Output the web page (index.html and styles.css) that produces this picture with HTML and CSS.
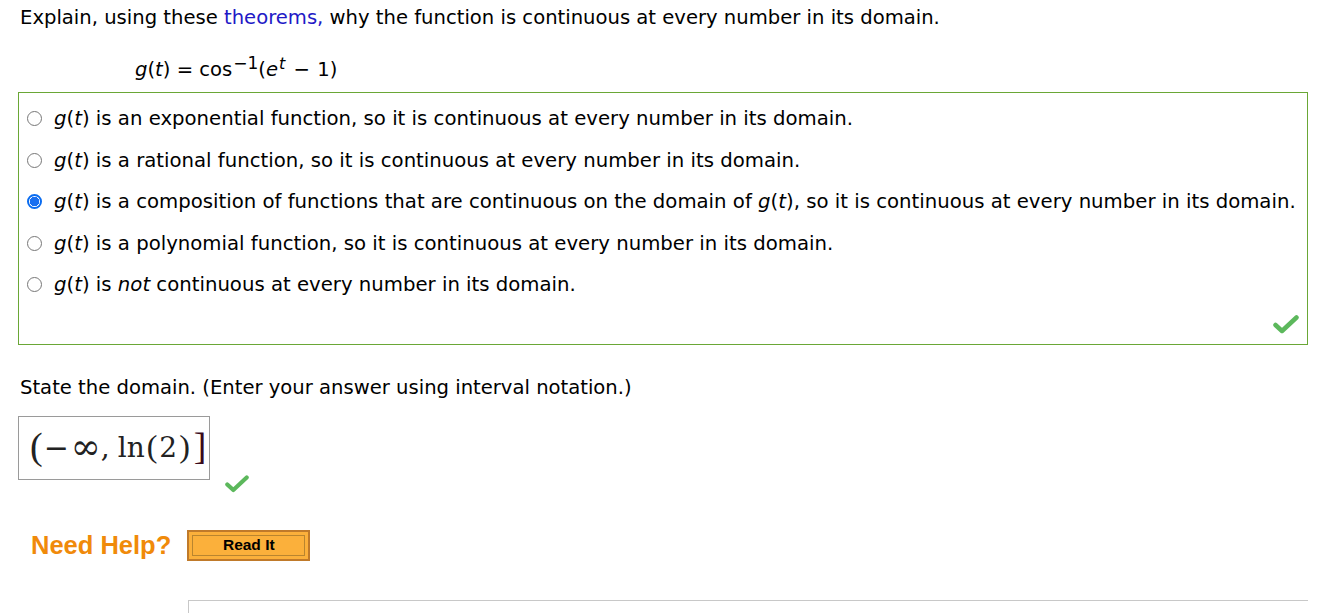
FILE: index.html
```html
<!DOCTYPE html>
<html>
<head>
<meta charset="utf-8">
<link rel="stylesheet" href="styles.css">
</head>
<body>
<div class="page">
  <p class="prompt">Explain, using these <a class="link" href="#">theorems,</a> why the function is continuous at every number in its domain.</p>
  <p class="formula"><i>g</i>(<i>t</i>) = cos<sup class="inv">−1</sup>(<i>e</i><sup class="exp"><i>t</i></sup> <span class="op">−</span> 1)</p>
  <div class="choices">
    <label class="choice"><span class="radio"></span><span><i>g</i>(<i>t</i>) is an exponential function, so it is continuous at every number in its domain.</span></label>
    <label class="choice"><span class="radio"></span><span><i>g</i>(<i>t</i>) is a rational function, so it is continuous at every number in its domain.</span></label>
    <label class="choice"><span class="radio on"></span><span><i>g</i>(<i>t</i>) is a composition of functions that are continuous on the domain of <i>g</i>(<i>t</i>), so it is continuous at every number in its domain.</span></label>
    <label class="choice"><span class="radio"></span><span><i>g</i>(<i>t</i>) is a polynomial function, so it is continuous at every number in its domain.</span></label>
    <label class="choice"><span class="radio"></span><span><i>g</i>(<i>t</i>) is <i>not</i> continuous at every number in its domain.</span></label>
    <div class="check-row">
      <svg class="check" width="26" height="20" viewBox="0 0 26 20"><path d="M2.5 11 L9 17 L23.5 3.5" fill="none" stroke="#5cb85c" stroke-width="4.5" stroke-linecap="round" stroke-linejoin="round"/></svg>
    </div>
  </div>
  <p class="prompt state">State the domain. (Enter your answer using interval notation.)</p>
  <div class="answer-row">
    <div class="answer"><span class="big">(</span><span class="minus">−</span><span class="inf">∞</span>,<span class="ln">ln</span><span class="mid">(</span>2<span class="mid">)</span><span class="bracket">]</span></div>
    <svg class="check small" width="24" height="19" viewBox="0 0 26 20"><path d="M2.5 11 L9 17 L23.5 3.5" fill="none" stroke="#5cb85c" stroke-width="4.5" stroke-linecap="round" stroke-linejoin="round"/></svg>
  </div>
  <div class="help">
    <span class="need">Need Help?</span>
    <span class="readit"><span class="readit-inner">Read It</span></span>
  </div>
  <div class="bottom-line"></div>
</div>
</body>
</html>
```
FILE: styles.css
```css
body {
  margin: 0;
  background: #fff;
  font-family: "DejaVu Sans", Verdana, sans-serif;
  color: #000;
}
.page {
  padding: 6px 18px 0 18px;
}
.prompt {
  margin: 0;
  font-size: 19.6px;
  line-height: 24px;
  padding-left: 2px;
}
.link {
  color: #2219c6;
  text-decoration: none;
}
.formula {
  margin: 28px 0 0 117px;
  font-size: 19.6px;
  line-height: 24px;
}
.formula sup {
  line-height: 0;
}
.formula .inv {
  font-size: 17px;
  vertical-align: 7px;
  margin: 0 0 0 1px;
}
.formula .exp {
  font-size: 16px;
  vertical-align: 7px;
  margin: 0 1px 0 1px;
}
.formula .op { margin: 0 1px; }
.choices {
  margin-top: 10px;
  border: 1px solid #6aa736;
  display: flex;
  flex-direction: column;
  padding: 5px 0 0 0;
}
.choice {
  display: flex;
  align-items: center;
  height: 41.5px;
  font-size: 19.7px;
  padding-left: 8px;
}
.radio {
  width: 13px;
  height: 13px;
  border: 1px solid #777;
  border-radius: 50%;
  margin-right: 12px;
  flex: none;
  box-sizing: content-box;
}
.radio.on {
  border: 2px solid #0a6cf0;
  width: 11px;
  height: 11px;
  background: radial-gradient(circle, #1a6ff0 0 4.5px, #fff 5px);
}
.check-row {
  display: flex;
  justify-content: flex-end;
  padding: 0 8px 10px 0;
  height: 38px;
  box-sizing: border-box;
  align-items: flex-end;
}
.state {
  margin-top: 31px;
}
.answer-row {
  display: flex;
  align-items: flex-end;
  margin-top: 16px;
}
.answer {
  border: 1px solid #9a9a9a;
  width: 192px;
  height: 64px;
  box-sizing: border-box;
  display: flex;
  align-items: center;
  padding-left: 11px;
  font-family: "DejaVu Serif", "Liberation Serif", serif;
  font-size: 28px;
  color: #222;
}
.big {
  font-family: "Liberation Serif", serif;
  font-size: 38px;
  margin-top: -4px;
}
.minus { margin: 0 2px 0 1px; font-size: 30px; }
.inf { font-size: 36px; margin-top: -3px; }
.ln { margin-left: 8px; }
.mid {
  font-family: "Liberation Serif", serif;
  font-size: 32px;
  margin: -3px 2px 0 2px;
}
.bracket {
  font-family: "Liberation Serif", serif;
  color: #3a0a1c;
  font-size: 38px;
  margin: -4px 0 0 2px;
}
.check.small {
  margin: 0 0 -13px 15px;
}
.help {
  display: flex;
  align-items: center;
  margin-top: 50px;
  padding-left: 13px;
}
.need {
  font-family: "Liberation Sans", Arial, sans-serif;
  font-weight: bold;
  color: #f08a0a;
  font-size: 25.5px;
  margin-right: 16px;
}
.readit {
  display: inline-block;
  border: 2px solid #c07a2a;
  background: #fbb03b;
  padding: 3px;
  width: 123px;
  height: 31px;
  box-sizing: border-box;
}
.readit-inner {
  display: flex;
  align-items: center;
  justify-content: center;
  height: 100%;
  border: 1px solid #b9852f;
  font-family: "Liberation Sans", Arial, sans-serif;
  font-weight: bold;
  font-size: 15.5px;
  box-sizing: border-box;
}
.bottom-line {
  margin: 39px 0 0 170px;
  border-top: 1px solid #c8c8c8;
  height: 20px;
  border-left: 1px solid #c8c8c8;
}
```
